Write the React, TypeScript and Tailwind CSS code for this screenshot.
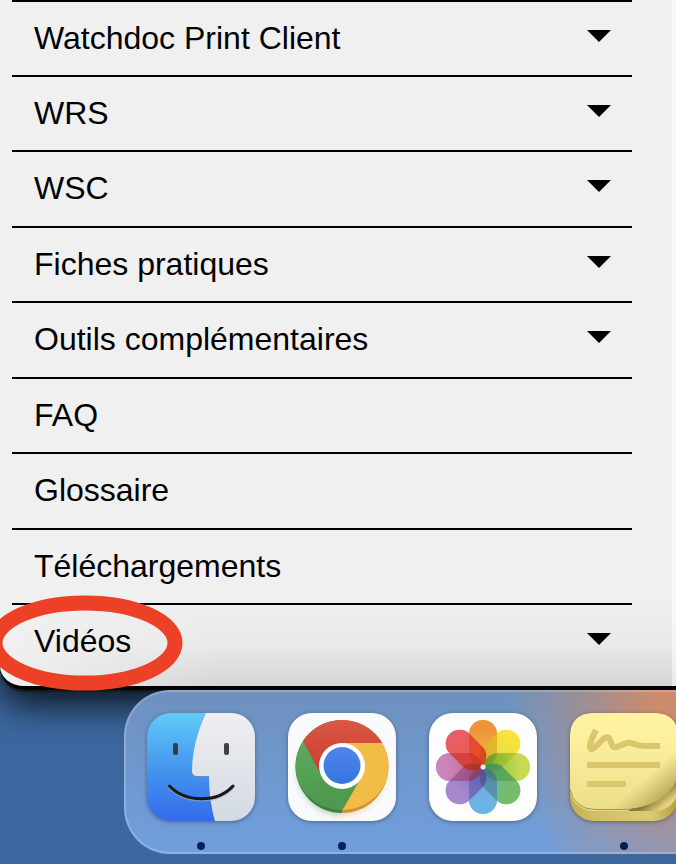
import React from "react";

type MenuItem = { label: string; expandable: boolean };

const items: MenuItem[] = [
  { label: "Watchdoc Print Client", expandable: true },
  { label: "WRS", expandable: true },
  { label: "WSC", expandable: true },
  { label: "Fiches pratiques", expandable: true },
  { label: "Outils complémentaires", expandable: true },
  { label: "FAQ", expandable: false },
  { label: "Glossaire", expandable: false },
  { label: "Téléchargements", expandable: false },
  { label: "Vidéos", expandable: true },
];

function Caret() {
  return (
    <svg className="mb-1 h-3 w-6 shrink-0" viewBox="0 0 24 12" aria-hidden="true">
      <path d="M0 0H24L12 12Z" fill="#000" />
    </svg>
  );
}

function MenuRow({ item, highlighted }: { item: MenuItem; highlighted: boolean }) {
  const row = "flex h-full w-full cursor-pointer items-center justify-between pr-[21px] pb-0.5 pl-[22px] text-left";
  return (
    <li className="relative h-[75px] border-t-2 border-black nth-[2n+3]:h-[76px]">
      {item.expandable ? (
        <button type="button" className={row} aria-expanded={false}>
          <span>{item.label}</span>
          <Caret />
        </button>
      ) : (
        <a href="#" className={row}>
          {item.label}
        </a>
      )}
      {highlighted && (
        <svg
          className="pointer-events-none absolute -top-[10px] -left-6 z-20 h-[96px] w-[196px]"
          viewBox="0 0 196 96"
          aria-hidden="true"
        >
          <ellipse cx="97" cy="48" rx="90" ry="40" fill="none" stroke="#ec4127" strokeWidth="15" />
        </svg>
      )}
    </li>
  );
}

function FinderIcon() {
  return (
    <svg viewBox="0 0 108 108" className="h-[108px] w-[108px] overflow-visible drop-shadow-[0_1px_2px_rgba(0,0,0,0.35)]" aria-hidden="true">
      <defs>
        <linearGradient id="finderBlue" x1="0" y1="0" x2="0" y2="1">
          <stop offset="0" stopColor="#60cbf8" />
          <stop offset="0.5" stopColor="#4597ef" />
          <stop offset="1" stopColor="#336bea" />
        </linearGradient>
        <linearGradient id="finderGrey" x1="0.5" y1="0" x2="0.5" y2="1">
          <stop offset="0" stopColor="#efeff0" />
          <stop offset="1" stopColor="#d3dae4" />
        </linearGradient>
        <clipPath id="finderClip">
          <rect width="108" height="108" rx="24" />
        </clipPath>
      </defs>
      <g clipPath="url(#finderClip)">
        <rect width="108" height="108" fill="url(#finderBlue)" />
        <path d="M59 0C50 20 45 39 45 59Q45 63 49 63H62C62 80 64 94 68 108H108V0Z" fill="url(#finderGrey)" />
        <path d="M45 60Q45 63.500 49 63.500H61" fill="none" stroke="#6f8db1" strokeWidth="1" />
      </g>
      <rect x="26" y="30" width="5" height="12" rx="2" fill="#383d42" />
      <rect x="77" y="30" width="5" height="12" rx="2" fill="#424242" />
      <path d="M22.500 74C38 90.500 70 91.500 86 74" fill="none" stroke="#aaa" strokeOpacity="0.6" strokeWidth="3.500" strokeLinecap="round" />
      <path d="M22.500 73C38 89.500 70 90.500 86 73" fill="none" stroke="#151719" strokeWidth="3" strokeLinecap="round" />
    </svg>
  );
}

function ChromeIcon() {
  return (
    <svg viewBox="0 0 108 108" className="h-[108px] w-[108px] overflow-visible drop-shadow-[0_1px_2px_rgba(0,0,0,0.35)]" aria-hidden="true">
      <defs>
        <linearGradient id="chRed" x1="0" y1="0" x2="0" y2="1">
          <stop offset="0" stopColor="#dc5b48" />
          <stop offset="1" stopColor="#cb3c2e" />
        </linearGradient>
        <linearGradient id="chGreen" x1="0" y1="0" x2="0" y2="1">
          <stop offset="0" stopColor="#62b164" />
          <stop offset="1" stopColor="#4b944b" />
        </linearGradient>
        <linearGradient id="chBlue" x1="0" y1="0" x2="0" y2="1">
          <stop offset="0" stopColor="#5085e9" />
          <stop offset="1" stopColor="#3475df" />
        </linearGradient>
        <filter id="chBlur" x="-30%" y="-30%" width="160%" height="160%">
          <feGaussianBlur stdDeviation="3" />
        </filter>
        <clipPath id="chDisc">
          <circle cx="54" cy="53.500" r="46.500" />
        </clipPath>
        <clipPath id="chFace">
          <ellipse cx="54" cy="52" rx="47" ry="45" />
        </clipPath>
      </defs>
      <rect width="108" height="108" rx="24" fill="#f9fafc" />
      <g filter="url(#chBlur)" opacity="0.45">
        <path d="M54 14A44 44 0 0 0 54 102Z" fill="#499049" />
        <path d="M54 14A44 44 0 0 1 54 102Z" fill="#e8ae43" />
      </g>
      <g clipPath="url(#chDisc)">
        <path d="M0 0H54V108H0Z" fill="#3e8041" />
        <path d="M54 0H108V108H54Z" fill="#cf9036" />
        <g clipPath="url(#chFace)">
          <path d="M0 0H54V108H0Z" fill="url(#chGreen)" />
          <path d="M54 30H108V108H54Z" fill="#f2bd46" />
          <path d="M54 53L74 63L54 98L30 70Z" fill="#4f9a50" />
        </g>
        <path d="M15 28V0H94V30H54L32 60Z" fill="url(#chRed)" />
      </g>
      <circle cx="54" cy="53" r="23" fill="#fff" />
      <circle cx="54" cy="52.500" r="18.500" fill="url(#chBlue)" />
    </svg>
  );
}

const petals = [
  { angle: 0, from: "#ef943b", to: "#ecc04c" },
  { angle: 45, from: "#f8e33d", to: "#d8d555" },
  { angle: 90, from: "#c8da51", to: "#7cc24a" },
  { angle: 135, from: "#76bd69", to: "#63b8a6" },
  { angle: 180, from: "#6cb4e4", to: "#7c9edb" },
  { angle: 225, from: "#a68acc", to: "#8c74c4" },
  { angle: 270, from: "#c886bd", to: "#d0627c" },
  { angle: 315, from: "#e95d65", to: "#f25a34" },
];

function PhotosIcon() {
  return (
    <svg viewBox="0 0 108 108" className="h-[108px] w-[108px] overflow-visible drop-shadow-[0_1px_2px_rgba(0,0,0,0.35)]" aria-hidden="true">
      <defs>
        {petals.map((p) => (
          <linearGradient key={p.angle} id={`petal${p.angle}`} x1="0" y1="0" x2="0" y2="1">
            <stop offset="0.2" stopColor={p.from} />
            <stop offset="1" stopColor={p.to} />
          </linearGradient>
        ))}
      </defs>
      <rect width="108" height="108" rx="24" fill="#fdfdfe" />
      {petals.map((p) => (
        <rect
          key={p.angle}
          transform={`rotate(${p.angle} 54 54)`}
          x="40"
          y="7"
          width="28"
          height="46"
          rx="14"
          fill={`url(#petal${p.angle})`}
        />
      ))}
      <g className="isolate opacity-50">
        {petals.map((p) => (
          <rect
            key={p.angle}
            className="mix-blend-multiply"
            transform={`rotate(${p.angle} 54 54)`}
            x="40"
            y="7"
            width="28"
            height="46"
            rx="14"
            fill={`url(#petal${p.angle})`}
          />
        ))}
      </g>
      <circle cx="54" cy="54" r="2.500" fill="#f2f2ed" />
    </svg>
  );
}

function StickiesIcon() {
  return (
    <svg viewBox="0 0 108 108" className="h-[108px] w-[108px] overflow-visible drop-shadow-[0_1px_2px_rgba(0,0,0,0.35)]" aria-hidden="true">
      <defs>
        <linearGradient id="padEdge" x1="0" y1="0" x2="1" y2="0">
          <stop offset="0" stopColor="#c4ad50" />
          <stop offset="0.2" stopColor="#d1bd65" />
          <stop offset="0.75" stopColor="#dccb76" />
          <stop offset="1" stopColor="#b39a40" />
        </linearGradient>
        <linearGradient id="padTop" x1="0" y1="0" x2="0" y2="1">
          <stop offset="0.2" stopColor="#fef1a0" />
          <stop offset="1" stopColor="#ebdf8b" />
        </linearGradient>
        <linearGradient id="padCurl" gradientUnits="userSpaceOnUse" x1="76" y1="64" x2="94" y2="84">
          <stop offset="0" stopColor="#b5a052" stopOpacity="0" />
          <stop offset="1" stopColor="#a8934b" stopOpacity="0.7" />
        </linearGradient>
        <linearGradient id="padShade" gradientUnits="userSpaceOnUse" x1="90" y1="80" x2="98" y2="90">
          <stop offset="0" stopColor="#8d7838" />
          <stop offset="1" stopColor="#e0d27f" />
        </linearGradient>
      </defs>
      <rect width="108" height="108" rx="24" fill="url(#padEdge)" />
      <path d="M0 40H108V73Q107 98 82 98H24Q0 96 0 74Z" fill="#e5d885" />
      <path d="M108 62V73Q107 98 82 98H58Z" fill="url(#padShade)" />
      <path d="M0 24Q0 0 24 0H84Q108 0 108 24V64C100 82 82 96 54 96H25Q3 95 0 75Z" fill="url(#padTop)" />
      <path d="M0 24Q0 0 24 0H84Q108 0 108 24V64C100 82 82 96 54 96H25Q3 95 0 75Z" fill="url(#padCurl)" />
      <path d="M0 76Q4 96 25 96.500H54C64 96.500 72 94.500 79 92" fill="none" stroke="#867a3e" strokeOpacity="0.65" strokeWidth="1" />
      <g fill="none" stroke="#dac66c" strokeWidth="6">
        <path d="M26 17C22 24 17 37 22 36C28 34 34 21 39 25C42 29 41 36 47 34C54 31 58 28 64 31C71 34 79 33 90 33" />
        <path d="M17 52H90" />
        <path d="M17 71H56" />
      </g>
    </svg>
  );
}

const apps = [
  { name: "Finder", Icon: FinderIcon, running: true },
  { name: "Google Chrome", Icon: ChromeIcon, running: true },
  { name: "Photos", Icon: PhotosIcon, running: false },
  { name: "Stickies", Icon: StickiesIcon, running: true },
];

function Dock() {
  return (
    <footer className="ml-[124px] h-[164px] overflow-hidden rounded-l-[46px] border-y-2 border-l-2 border-white/20 bg-[radial-gradient(ellipse_170px_250px_at_100%_0%,#cb8b6c_15%,rgba(203,139,108,0.55)_50%,rgba(203,139,108,0)_100%),linear-gradient(to_bottom,#6e91be,#709fdd)] bg-origin-border pt-[21px] pl-[21px]">
      <ul className="flex w-max gap-[33px]">
        {apps.map(({ name, Icon, running }) => (
          <li key={name}>
            <button type="button" aria-label={name} className="flex cursor-pointer flex-col items-center gap-[21px]">
              <Icon />
              {running && <span className="h-2 w-2 rounded-full bg-[#05215d]" />}
            </button>
          </li>
        ))}
      </ul>
    </footer>
  );
}

export default function App() {
  return (
    <div className="min-h-screen overflow-hidden bg-[linear-gradient(to_bottom,#35619a,#3d689f)] font-['Liberation_Sans',Arial,sans-serif] text-[32px] leading-9 text-black">
      <main className="relative rounded-bl-[24px] border-b-4 border-black bg-[linear-gradient(to_right,#f0f0f0,rgba(240,240,240,0)_220px),linear-gradient(to_bottom,#f0f0f0_87%,#e9e9e9_94%,#d5d5d5_100%)] shadow-[0_2px_0_#181a1d,0_14px_36px_rgba(0,0,0,0.85)]">
        <nav aria-label="Documentation" className="border-r-4 border-white/50 pr-10 pb-[7px] pl-3">
          <ul>
            {items.map((item) => (
              <MenuRow key={item.label} item={item} highlighted={item.label === "Vidéos"} />
            ))}
          </ul>
        </nav>
      </main>
      <div className="relative">
        <Dock />
      </div>
    </div>
  );
}
